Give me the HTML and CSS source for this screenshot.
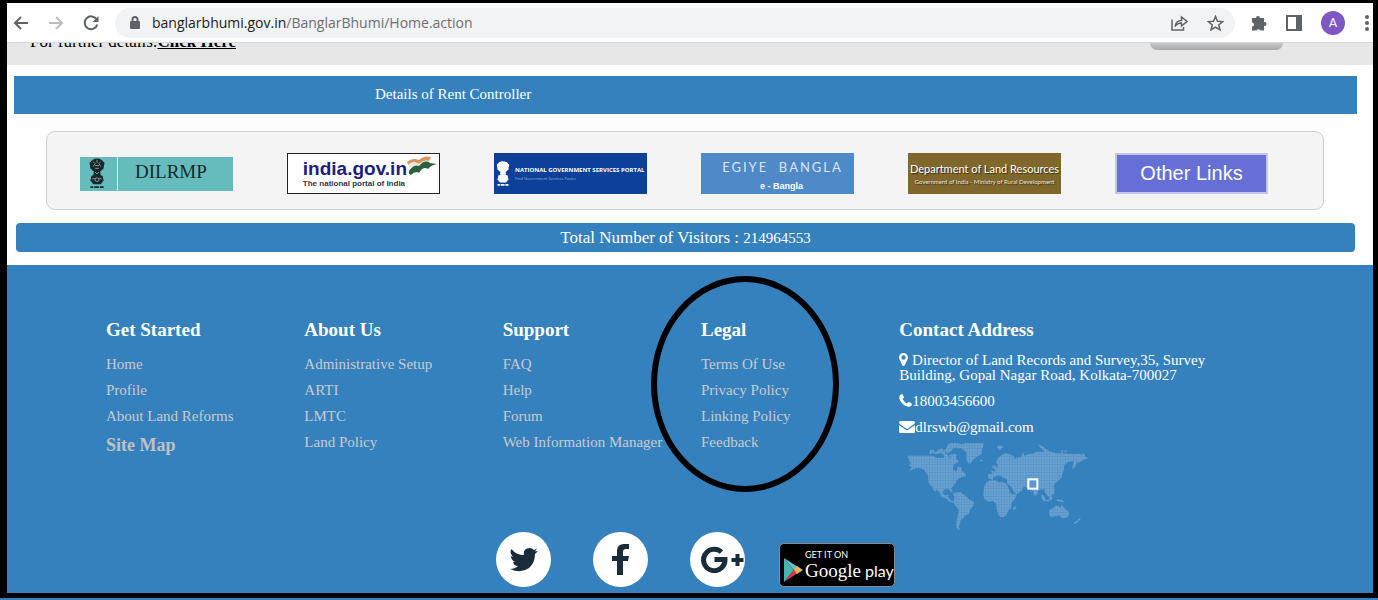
FILE: index.html
```html
<!DOCTYPE html>
<html lang="en">
<head>
	<meta charset="UTF-8">
	<meta name="viewport" content="width=device-width, initial-scale=1.0">
	<title>Banglarbhumi</title>
	<link rel="stylesheet" href="styles.css">
</head>
<body>
	<!-- shared shapes -->
	<svg class="sprite" aria-hidden="true">
		<symbol id="emblem" viewBox="0 0 18 34">
			<path d="M4 2Q9-1 14 2L17 5 16 11 13 14H5L2 11 1 5z"/>
			<path d="M6 13h6l1 5H5z"/>
			<path d="M3 19Q9 16 15 19L16 24 13 28H5L2 24z"/>
			<path d="M2 30h3v2H2zM6 30h5v2H6zM12 30h4v2h-4z"/>
			<path class="emblem-line" d="M5 4l2 2-2 3M13 4l-2 2 2 3M7 8h4M9 2v3M7 11h4M7 15l2 2 2-2M4 22h3M11 22h3"/>
			<circle class="emblem-line" cx="9" cy="23" r="2"/>
		</symbol>
	</svg>

	<div class="screen">
		<header class="browser">
			<button class="btn-tool" aria-label="Back">
				<svg width="16" height="16" viewBox="0 0 16 16"><path class="stroke" d="M15 8H2M8 2L2 8l6 6"/></svg>
			</button>
			<button class="btn-tool off" aria-label="Forward">
				<svg width="16" height="16" viewBox="0 0 16 16"><path class="stroke" d="M1 8h13M8 2l6 6-6 6"/></svg>
			</button>
			<button class="btn-tool reload" aria-label="Reload">
				<svg width="16" height="16" viewBox="0 0 16 16"><path class="stroke" d="M13.6 4.4A6.4 6.4 0 1 0 14.3 9.500"/><path d="M15.500 1v6H9.500z"/></svg>
			</button>
			<div class="address">
				<svg width="10" height="13" viewBox="0 0 10 13"><path d="M1 5h8q1 0 1 1v6q0 1-1 1H1q-1 0-1-1V6q0-1 1-1z"/><path class="stroke" d="M2.500 6V3.500a2.500 2.500 0 0 1 5 0V6"/></svg>
				<p class="url">banglarbhumi.gov.in<span>/BanglarBhumi/Home.action</span></p>
				<button class="btn-tool" aria-label="Share">
					<svg width="17" height="16" viewBox="0 0 17 16"><path class="thin" d="M1 4.500V15h11.500v-3M4 11.500Q5 5.500 10.500 5.500V2L16 6.500 10.500 11V8Q6.500 8 4 11.500z"/></svg>
				</button>
				<button class="btn-tool" aria-label="Bookmark">
					<svg width="17" height="16" viewBox="0 0 17 16"><path class="thin" d="M8.500 1.500l2 4.700 5.200.400-4 3.300 1.300 5-4.500-2.700L4 14.900l1.300-5-4-3.300 5.200-.400z"/></svg>
				</button>
			</div>
			<button class="btn-tool" aria-label="Extensions">
				<svg width="16" height="16" viewBox="0 0 16 16"><path d="M5 3a2 2 0 0 1 4 0h4v4h.500a2 2 0 0 1 0 4H13v4.500H9.500a2.200 2.200 0 0 0-4 0H1V11.500a2 2 0 0 0 0-4V3z"/></svg>
			</button>
			<button class="btn-tool" aria-label="Side panel">
				<svg width="16" height="16" viewBox="0 0 16 16"><path fill-rule="evenodd" d="M0 0h16v16H0zM2 2v12h8V2z"/></svg>
			</button>
			<button class="avatar">A</button>
			<button class="btn-tool more" aria-label="Menu">
				<svg width="4" height="16" viewBox="0 0 4 16"><circle cx="2" cy="2" r="2"/><circle cx="2" cy="8" r="2"/><circle cx="2" cy="14" r="2"/></svg>
			</button>
		</header>

		<div class="details">
			<p class="details-text">For further details:<a href="#">Click Here</a></p>
			<button class="btn-gray" aria-label="More details"></button>
		</div>

		<main class="main">
			<div class="rent"><a href="#">Details of Rent Controller</a></div>
			<div class="list-link">
				<a href="#" class="link-box dilrmp">
					<svg width="18" height="32"><use href="#emblem"/></svg>
					<span>DILRMP</span>
				</a>
				<a href="#" class="link-box india">
					<span class="india-text"><b>india.gov.in</b><small>The national portal of India</small></span>
					<svg width="30" height="20" viewBox="0 0 30 20">
						<path fill="#d9935b" d="M0 7Q5 2 12 5 17 0 24 2l-2 4Q17 4 12 9 6 5 1 10z"/>
						<path fill="#eee6da" d="M1 10Q6 5 12 9q5-5 10-3l1 3q-5-3-10 3-4-4-10 1z"/>
						<path fill="#2a6040" d="M2 16q5-7 10-5Q18 4 23 8l7 1q-6 1-9 5-5-3-9 4-3-3-8 2-3-1-2-4z"/>
					</svg>
				</a>
				<a href="#" class="link-box national">
					<svg width="14" height="34"><use href="#emblem"/></svg>
					<span><b>NATIONAL GOVERNMENT SERVICES PORTAL</b><small>Find Government Services Faster</small></span>
				</a>
				<a href="#" class="link-box egiye"><span>EGIYE&nbsp; BANGLA</span><b>e - Bangla</b></a>
				<a href="#" class="link-box land"><span>Department of Land Resources</span><small>Government of India - Ministry of Rural Development</small></a>
				<a href="#" class="link-box other">Other Links</a>
			</div>
			<p class="visitors">Total Number of Visitors : <span>214964553</span></p>
		</main>

		<footer class="footer">
			<div class="container">
				<div class="col">
					<h3>Get Started</h3>
					<ul class="list-menu">
						<li><a href="#">Home</a></li>
						<li><a href="#">Profile</a></li>
						<li><a href="#">About Land Reforms</a></li>
						<li class="sitemap"><a href="#">Site Map</a></li>
					</ul>
				</div>
				<div class="col">
					<h3>About Us</h3>
					<ul class="list-menu">
						<li><a href="#">Administrative Setup</a></li>
						<li><a href="#">ARTI</a></li>
						<li><a href="#">LMTC</a></li>
						<li><a href="#">Land Policy</a></li>
					</ul>
				</div>
				<div class="col">
					<h3>Support</h3>
					<ul class="list-menu">
						<li><a href="#">FAQ</a></li>
						<li><a href="#">Help</a></li>
						<li><a href="#">Forum</a></li>
						<li><a href="#">Web Information Manager</a></li>
					</ul>
				</div>
				<div class="col legal">
					<h3>Legal</h3>
					<ul class="list-menu">
						<li><a href="#">Terms Of Use</a></li>
						<li><a href="#">Privacy Policy</a></li>
						<li><a href="#">Linking Policy</a></li>
						<li><a href="#">Feedback</a></li>
					</ul>
					<div class="ring"></div>
				</div>
				<div class="col contact">
					<h3>Contact Address</h3>
					<p><svg width="9" height="13" viewBox="0 0 9 13"><path fill-rule="evenodd" d="M4.500 0A4.500 4.500 0 0 1 9 4.500Q9 6 5.500 12.400q-1 1.200-2 0Q0 6 0 4.500A4.500 4.500 0 0 1 4.500 0zm0 2.300a2.200 2.200 0 1 0 0 4.400 2.200 2.200 0 0 0 0-4.400z"/></svg> Director of Land Records and Survey,35, Survey Building, Gopal Nagar Road, Kolkata-700027</p>
					<p><svg width="13" height="13" viewBox="0 0 13 13"><path d="M1 1l2-1q1 0 2 3.500L3.600 5Q5 8 8 9.400L9.500 8Q13 9 13 10l-1 2q-2 1.500-5 0Q2 9.500 .500 5 0 3 1 1z"/></svg>18003456600</p>
					<p><svg width="16" height="12" viewBox="0 0 16 12"><path d="M1.500 0h13Q16 0 16 1.500q0 1-1.500 2L9 7.400q-1 .600-2 0L1.500 3.500Q0 2.500 0 1.500 0 0 1.500 0z"/><path d="M0 4l6.500 4.600q1.500 1 3 0L16 4v6.500q0 1.500-1.500 1.500h-13Q0 12 0 10.500z"/></svg>dlrswb@gmail.com</p>
					<!-- dotted world map -->
					<svg class="map" viewBox="80 392 546 273" role="img" aria-label="World map">
						<defs>
							<pattern id="dots" width="8" height="8" patternUnits="userSpaceOnUse">
								<rect width="8" height="8" fill="#5493c8"/>
								<rect width="6" height="6" fill="#6ca2cf"/>
							</pattern>
						</defs>
						<g fill="url(#dots)">
							<path d="M84 436h76l10 6h24l-2-14 12 4 8 14 10-16 10 2-2 14 10 8-16 8-4 14 10 8 6-16 10 4 2 10 10 8 2 8-14 2-14 10-6 12-10 12 4 14-6-2-6-10-14 2-4 10 8 8 10-6-2 10 8 10 10 4-2 4-12-4-10-10-14-4-6-14-8-8-4 2 2 6-8-8-6-12-8-8-2-22-12-18-16-6-16 4-10 6-2-4 8-6-10-8 6-4z"/>
							<path d="M152 420l10-2 6 8 10-8 12-4 2 8 10-8 2-10 10-6h22l10 4-10 8-14 4-6 8-10 6-8-2-4 6-12-4-10 4-12-4-10 4zM208 436l8-6 4 8-8 4z"/>
							<path d="M234 406l16-4 10-4h52v8l-4 12-2 14-14 8-10 8-10 12-8-4-4-14 2-14-8-8-8-6h-12z"/>
							<path d="M220 550l10-4h14l10 8 8 4 8 10 14 6-2 12-8 10-6 14-12 6-4 8-8 4-2 12-4 10 4 10-6-2-6-10 2-16 4-18 2-16-10-12-6-12 4-14z"/>
							<path d="M314 530l6-12 10-8h18l10 6 10-2 14 6 6 14 4 12 6 6 14 0-4 12-12 14v14l-8 8-6 12-8 8h-12l-6-10-4-14-2-16-8-8-14 2-12-6-4-12zM400 596l6-8h6l-6 12z"/>
							<path d="M326 504v-12l14-2-6-10 12 4 2-8-12-4 8-8 8 8 4-8-6-8 6-14 12-8 10-6 12 4 16 6-4 8 10-4 14-2 4-14 4 2v8l14-4 12-2 12-6 22 0-8-12-8-8 10 2 12 10 12 8 18 4 16 0 18 2 20 2 18-2 8 6-2-6 8 0v8l10 6-14 4-8 6-12 4-6 14-6 4 0-12 4-12-16 2-10 8-4 4v14l-8 12-8 4 6 8-10 10-6 4-6 10 4 12-8 14-6 6-8-4-6-8-4-12-16 4-6 14-4 4-6-10-6-14-14-2-8-4-8 14-14 10-8-6-8-16-12-10-2-14-10-4-8-6-12 0-8 4-4 8z"/>
							<path d="M354 406h16v6l-8 8-8-8zM302 448h8v4h-8zM476 402l10 4 10 12-10-2zM546 420h6v6h-6zM556 420h6v6h-6zM544 480l6 8-4 14-10 10-4-4 8-8zM486 552l8 4 6 14-6 4-8-12zM500 568l10 2v4l-10-2zM510 554l8 2v12l-8 2zM516 536l6 2 4 14-6-2zM532 566l14 2 10 6-8 2-14-4zM452 540l4 0 2 6-6-2z"/>
							<path d="M510 598l12-4 6-8 10 2 4 4 6-8 6 8 8 8 8 6-2 10-8 8h-12l-8-8-12 2-10 2-8-4zM584 636l10-4 2-6 8-4-2 6-10 10-8 4z"/>
						</g>
						<rect x="447" y="507" width="27" height="28" fill="#5c98cb" stroke="#fff" stroke-width="6"/>
					</svg>
				</div>
			</div>
			<div class="social">
				<a href="#" class="circle" aria-label="Twitter"><svg width="28" height="24" viewBox="0 0 28 24"><path d="M28 3l-3 3Q25 15 19 20 11 26 0 21q5 0 8-3-4 0-5-4h2Q1 12 1 8l2 1Q-1 5 1.500 1 6 7 14 7 13 2 17 .500q4-1.500 7 1.500l3-1.500-2 3z"/></svg></a>
				<a href="#" class="circle" aria-label="Facebook"><svg width="18" height="31" viewBox="0 0 18 31"><path d="M17 0v5h-3q-3 0-3 3v4h6l-1 5h-5v14H5V17H0v-5h5V7q0-7 7-7z"/></svg></a>
				<a href="#" class="circle google" aria-label="Google plus"><svg width="43" height="27" viewBox="0 0 43 27"><path class="ring-g" d="M20.500 6A10.700 10.700 0 1 0 24 13.500H13.500"/><path d="M34.500 8h4v4h4v4h-4v4h-4v-4h-4v-4h4z"/></svg></a>
				<a href="#" class="play">
					<svg width="20" height="24" viewBox="0 0 20 24"><path fill="#45b5b0" d="M1 0l10 12L1 24z"/><path fill="#6cc3c8" d="M1 0l14 9-4 3z"/><path fill="#d8394c" d="M1 24l10-12 4 3z"/><path fill="#f0b258" d="M14 8l6 4-6 4-3-4z"/></svg>
					<span class="play-text"><small>GET IT ON</small><span><b>Google</b> play</span></span>
				</a>
			</div>
		</footer>
	</div>
</body>
</html>
```
FILE: styles.css
```css
*{ box-sizing: border-box;}
html{ background-color: #3581bd;}
body{
	margin: 0; padding-bottom: 2px;
	font-family: "Liberation Serif", "Times New Roman", serif; font-size: 15px;
}
h3, p, ul{ margin: 0; padding: 0;}
ul{ list-style: none;}
a{ color: inherit; text-decoration: none;}
button{ border: 0; padding: 0; background: none; font: inherit;}
svg{ flex: none; fill: currentColor;}
.sprite{ display: none;}
.screen{
	border: solid #000; border-width: 3px 5px 5px 7px;
	background-color: #fff;
}

/* browser bar */
.browser{
	display: flex; align-items: center; height: 40px; padding-left: 6px;
	border-bottom: 1px solid #d5d7d9; color: #5f6368; overflow: hidden;
}
.btn-tool{ display: flex; color: #5f6368; margin-right: 19px;}
.btn-tool.off{ color: #bcbec1;}
.btn-tool.reload{ margin-right: 16px;}
.btn-tool.more{ margin-right: 4px;}
.stroke{ fill: none; stroke: currentColor; stroke-width: 2;}
.thin{ fill: none; stroke: currentColor; stroke-width: 1.5;}
.address{
	flex: 1; display: flex; align-items: center; height: 30px; margin-right: 16px;
	padding: 0 11px 0 15px; border-radius: 15px; background-color: #f1f3f4;
}
.address .btn-tool:last-child{ margin-right: 0;}
.url{
	flex: 1; margin-left: 12px; color: #202124;
	font-family: "Open Sans", sans-serif; font-size: 14px;
}
.url span{ color: #6b6f73;}
.avatar{
	width: 24px; height: 24px; margin-right: 20px; border-radius: 50%;
	background-color: #7e57c2; color: #fff; font-family: Roboto, sans-serif; font-size: 13px;
}

.details{
	display: flex; justify-content: space-between; align-items: flex-start;
	height: 22px; padding: 0 90px 0 23px; background-color: #e7e7e7; overflow: hidden;
}
.details-text{ margin-top: -11px; color: #000; font-size: 17px; line-height: 20px;}
.details-text a{ font-weight: bold; text-decoration: underline;}
.btn-gray{
	width: 133px; height: 7px; border-radius: 0 0 8px 8px;
	background: linear-gradient(#c8c8c8, #a9a9a9);
}

.main{ padding: 11px 16px 13px 7px;}
.rent{
	height: 38px; padding-left: 361px; background-color: #3581bd; color: #fff;
	line-height: 36px;
}
.list-link{
	display: grid; grid-template-columns: repeat(6, 1fr); gap: 54px; align-items: center;
	height: 79px; margin: 17px 33px 13px 32px; padding: 6px 55px 0 33px;
	border: 1px solid #cfcfcf; border-radius: 9px; background-color: #f4f4f4;
}
.link-box{
	display: flex; align-items: center; justify-content: center; height: 41px;
	overflow: hidden; white-space: nowrap;
}
.link-box small{ display: block;}
.emblem-line{ fill: none; stroke: #fff; stroke-opacity: .5; stroke-width: 1;}
.dilrmp{
	height: 34px; justify-content: flex-start; background-color: #66bcbc;
	color: #17292c; font-size: 19px;
}
.dilrmp svg{ margin: 0 11px 0 8px;}
.dilrmp span{
	flex: 1; align-self: stretch; padding-left: 17px; border-left: 1px solid #d9f0ef;
	line-height: 30px;
}
.india{
	justify-content: flex-end; border: 1px solid #222; background-color: #fff;
	color: #1c1c84; font-family: "Liberation Sans", Arial, sans-serif;
}
.india b{ display: block; font-size: 19px; line-height: 20px;}
.india small{ color: #33334d; font-size: 8px; font-weight: bold; line-height: 10px;}
.india svg{ align-self: flex-start; margin: 1px 2px 0 0;}
.national{
	justify-content: flex-start; padding-left: 2px; background-color: #0d4199; color: #fff;
	font-family: "Open Sans", sans-serif;
}
.national span{ margin-left: 5px;}
.national b{ display: block; font-size: 6px; line-height: 10px;}
.national small{ color: #9db6dd; font-size: 4px; line-height: 8px;}
.egiye{
	flex-direction: column; background-color: #5089c8; color: #d6e6f7;
	font-family: Lato, sans-serif;
}
.egiye span{ padding-left: 10px; font-size: 13px; letter-spacing: 2px; line-height: 24px;}
.egiye b{ padding-left: 8px; color: #fff; font: bold 9px/14px "Liberation Sans", sans-serif;}
.land{
	flex-direction: column; background-color: #80682d; color: #fff;
	font-family: Lato, sans-serif; text-shadow: 1px 1px 1px #33290f;
}
.land span{ font-size: 11px; line-height: 15px;}
.land small{ color: #eee6d2; font-size: 6px; line-height: 11px;}
.other{
	border: 2px solid #c3c5f0; background-color: #666fd6; color: #fff;
	font-family: "Liberation Sans", Arial, sans-serif; font-size: 20px;
}
.visitors{
	height: 29px; margin: 0 2px; border-radius: 4px; background-color: #3581bd;
	color: #fff; font-size: 17px; line-height: 30px; text-align: center;
}
.visitors span{ font-size: 15px;}

/* footer */
.footer{ padding: 53px 8px 6px 0; background-color: #3581bd; color: #fff;}
.container{
	display: grid; grid-template-columns: repeat(4, 1fr) 2fr;
	max-width: 1190px; margin: 0 auto;
}
.col{ padding: 0 15px; white-space: nowrap;}
.col h3{ margin-bottom: 9px; font-size: 19px; line-height: 24px;}
.list-menu{ color: #c8cbce; line-height: 26px;}
.sitemap{ margin-top: 3px; color: #bfc1c3; font-size: 18px; font-weight: bold;}
.legal{ position: relative;}
/* mark drawn over the Legal column */
.ring{
	position: absolute; top: -42px; left: -35px; width: 188px; height: 216px;
	border: 6px solid #000; border-radius: 50%;
}
.contact{ padding-right: 40px; white-space: normal;}
.contact h3{ margin-bottom: 11px;}
.contact p{ margin-bottom: 11px; line-height: 15px;}
.contact p svg{ vertical-align: -1px;}
.contact .map{ display: block; width: 182px; height: 91px; margin: -5px 0 0 7px;}
.social{
	display: flex; align-items: center; justify-content: center; gap: 42px;
	padding-left: 19px;
}
.circle{
	display: flex; align-items: center; justify-content: center; width: 55px; height: 55px;
	border-radius: 50%; background-color: #fff; color: #1a2b39;
}
.circle.google{ padding-left: 9px;}
.ring-g{ fill: none; stroke: currentColor; stroke-width: 5;}
.play{
	display: flex; align-items: center; align-self: flex-end; width: 116px; height: 44px;
	margin-left: -8px; padding-left: 3px; border: 1px solid #8a8a8a; border-radius: 5px;
	background-color: #000; font-family: Lato, sans-serif; white-space: nowrap;
}
.play svg{ margin-top: 10px;}
.play-text{ margin-left: 2px; font-size: 16px; line-height: 20px;}
.play-text small{ display: block; font-size: 9px; line-height: 12px;}
.play-text b{ font-family: "Liberation Serif", serif; font-size: 19px; font-weight: normal;}
```
